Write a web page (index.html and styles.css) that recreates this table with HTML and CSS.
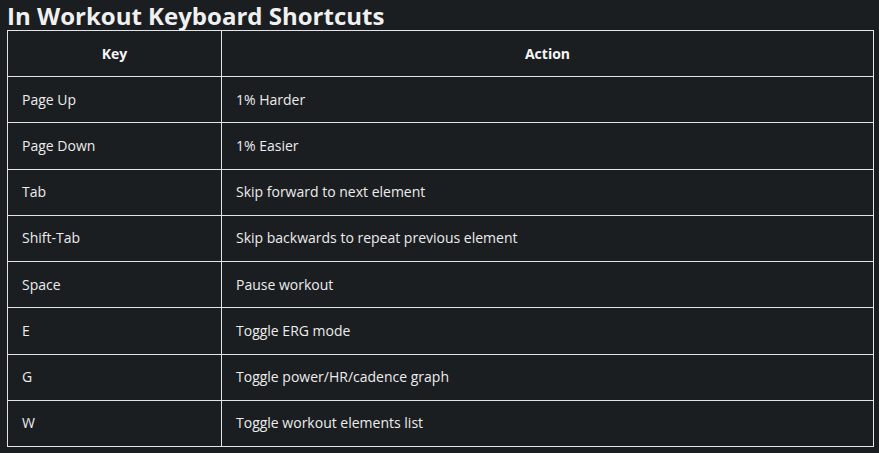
FILE: index.html
```html
<!DOCTYPE html>
<html>
<head>
<meta charset="utf-8">
<link rel="stylesheet" href="styles.css">
</head>
<body>
<div class="page">
  <h2 class="title">In Workout Keyboard Shortcuts</h2>
  <table class="shortcuts">
    <thead>
      <tr><th class="col-key">Key</th><th>Action</th></tr>
    </thead>
    <tbody>
      <tr><td>Page Up</td><td>1% Harder</td></tr>
      <tr><td>Page Down</td><td>1% Easier</td></tr>
      <tr><td>Tab</td><td>Skip forward to next element</td></tr>
      <tr><td>Shift-Tab</td><td>Skip backwards to repeat previous element</td></tr>
      <tr><td>Space</td><td>Pause workout</td></tr>
      <tr><td>E</td><td>Toggle ERG mode</td></tr>
      <tr><td>G</td><td>Toggle power/HR/cadence graph</td></tr>
      <tr><td>W</td><td>Toggle workout elements list</td></tr>
    </tbody>
  </table>
</div>
</body>
</html>
```

FILE: styles.css
```css
html, body {
  margin: 0;
  padding: 0;
  background: #1b1e21;
  color: #ececec;
  font-family: "Open Sans", "Liberation Sans", sans-serif;
}
.page {
  padding: 0 5px 0 7px;
}
.title {
  margin: 0;
  padding-top: 1px;
  font-size: 24px;
  line-height: 29px;
  font-weight: 700;
  color: #f0f0f0;
}
.shortcuts {
  width: 867px;
  border-collapse: collapse;
  font-size: 14px;
  line-height: 20px;
}
.shortcuts tr {
  height: 46.22px;
}
.shortcuts th,
.shortcuts td {
  border: 1px solid #e3e5e8;
  padding: 0 14px;
  text-align: left;
  vertical-align: middle;
}
.shortcuts th {
  text-align: center;
  font-weight: 700;
  color: #f5f5f5;
}
.shortcuts .col-key {
  width: 185px;
}
```
